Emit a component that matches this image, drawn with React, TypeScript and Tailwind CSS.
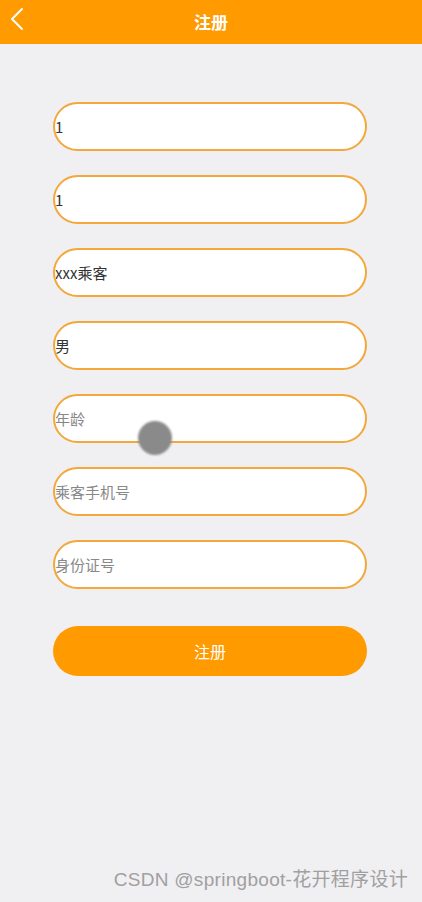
const fields = [
  { value: '1', placeholder: '用户名' },
  { value: '1', placeholder: '密码' },
  { value: 'xxx乘客', placeholder: '乘客姓名' },
  { value: '男', placeholder: '性别' },
  { value: '', placeholder: '年龄' },
  { value: '', placeholder: '乘客手机号' },
  { value: '', placeholder: '身份证号' },
]

export default function App() {
  return (
    <div
      className="relative flex h-[902px] flex-col bg-[#f0eff2]"
      style={{ fontFamily: '"Noto Sans CJK SC", "Noto Sans", sans-serif' }}
    >
      <header className="relative flex h-[44px] items-center justify-center bg-[#ff9a00]">
        <button type="button" className="absolute left-[9px] top-[7px] text-white">
          <svg width="16" height="24" viewBox="0 0 16 24" fill="none">
            <polyline points="13,2 3,12 13,22" stroke="currentColor" strokeWidth="2" strokeLinecap="round" strokeLinejoin="round" />
          </svg>
        </button>
        <h1 className="text-[17px] font-bold text-white">注册</h1>
      </header>

      <main className="flex flex-col items-center pt-[58px]">
        <form className="ml-[-2px] flex w-[314px] flex-col gap-[24px]">
          {fields.map((f, idx) => (
            <input
              key={idx}
              type="text"
              defaultValue={f.value}
              placeholder={f.placeholder}
              className="h-[49px] w-full rounded-full border-2 border-[#f2a83a] bg-white px-0 text-[15px] text-[#333] placeholder:text-[#888] focus:outline-none"
            />
          ))}
          <button
            type="button"
            className="mt-[13px] h-[50px] w-full rounded-full bg-[#ff9a00] text-[16px] text-white"
          >
            注册
          </button>
        </form>
      </main>

      {/* touch indicator */}
      <span className="absolute left-[138px] top-[421px] h-[34px] w-[34px] rounded-full bg-[#8a8a8a] blur-[1px]" />

      <p
        className="absolute bottom-[8px] right-[14px] text-[19px] tracking-[0.3px] text-[#a0a0a0]"
        style={{ fontFamily: '"Liberation Sans", "Noto Sans CJK SC", sans-serif' }}
      >
        CSDN @springboot-花开程序设计
      </p>
    </div>
  )
}
